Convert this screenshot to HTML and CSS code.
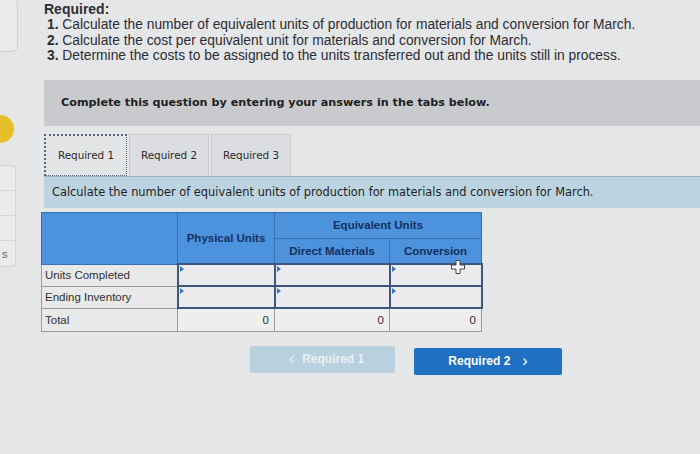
FILE: index.html
```html
<!DOCTYPE html>
<html>
<head>
<meta charset="utf-8">
<link rel="stylesheet" href="styles.css">
</head>
<body>
<div class="page">
  <aside class="side">
    <div class="side-top"></div>
    <div class="side-dot"></div>
    <div class="side-list">
      <div class="side-cell"></div>
      <div class="side-cell"></div>
      <div class="side-cell"></div>
      <div class="side-cell last">s</div>
    </div>
  </aside>
  <main class="main">
    <div class="req">
      <div class="req-title">Required:</div>
      <div class="req-line"><b>1.</b> Calculate the number of equivalent units of production for materials and conversion for March.</div>
      <div class="req-line"><b>2.</b> Calculate the cost per equivalent unit for materials and conversion for March.</div>
      <div class="req-line"><b>3.</b> Determine the costs to be assigned to the units transferred out and the units still in process.</div>
    </div>
    <div class="banner">Complete this question by entering your answers in the tabs below.</div>
    <div class="tabs">
      <div class="tab active">Required 1</div>
      <div class="tab">Required 2</div>
      <div class="tab">Required 3</div>
    </div>
    <div class="instr">Calculate the number of equivalent units of production for materials and conversion for March.</div>
    <div class="table-wrap">
      <table class="eq">
        <colgroup>
          <col class="c-label"><col class="c-phys"><col class="c-dm"><col class="c-conv">
        </colgroup>
        <thead>
          <tr class="h1">
            <th rowspan="2" class="blank"></th>
            <th rowspan="2">Physical Units</th>
            <th colspan="2">Equivalent Units</th>
          </tr>
          <tr class="h2">
            <th>Direct Materials</th>
            <th>Conversion</th>
          </tr>
        </thead>
        <tbody>
          <tr class="inrow">
            <td class="label">Units Completed</td>
            <td class="in"><span class="mark"></span></td>
            <td class="in"><span class="mark"></span></td>
            <td class="in"><span class="mark"></span></td>
          </tr>
          <tr class="inrow">
            <td class="label">Ending Inventory</td>
            <td class="in"><span class="mark"></span></td>
            <td class="in"><span class="mark"></span></td>
            <td class="in"><span class="mark"></span></td>
          </tr>
          <tr class="total">
            <td class="label">Total</td>
            <td class="num">0</td>
            <td class="num">0</td>
            <td class="num">0</td>
          </tr>
        </tbody>
      </table>
      <svg class="cursor" width="16" height="16" viewBox="0 0 16 16">
        <path d="M6 1.5h4v4.5h4.5v4h-4.5v4.5h-4v-4.5h-4.5v-4h4.5z" fill="#ffffff" stroke="#444" stroke-width="1"/>
      </svg>
    </div>
    <div class="nav">
      <div class="btn prev"><span class="chev">&lsaquo;</span> Required 1</div>
      <div class="btn next">Required 2 <span class="chev wide">&rsaquo;</span></div>
    </div>
  </main>
</div>
</body>
</html>
```

FILE: styles.css
```css
* { box-sizing: border-box; }
html, body { margin: 0; padding: 0; }
body {
  background: #e5e6e8;
  width: 700px;
  height: 454px;
  overflow: hidden;
  font-family: "Liberation Sans", Arial, sans-serif;
  color: #2a2a2e;
}
.page {
  display: flex;
  align-items: flex-start;
}
.side {
  width: 44px;
  flex: none;
  display: flex;
  flex-direction: column;
}
.side-top {
  width: 18px;
  height: 54px;
  margin-top: -2px;
  border: 1px solid #d1d2d5;
  border-left: none;
  border-radius: 0 6px 6px 0;
  background: #e9eaec;
}
.side-dot {
  width: 28px;
  height: 28px;
  margin-left: -14px;
  margin-top: 63px;
  border-radius: 50%;
  background: #e6bf2a;
}
.side-list {
  margin-top: 22px;
  width: 16px;
  border: 1px solid #d4d5d8;
  border-left: none;
  border-radius: 0 4px 4px 0;
  background: #e9eaec;
}
.side-cell {
  height: 25px;
  border-bottom: 1px solid #d4d5d8;
  font-size: 11px;
  color: #666;
  padding: 7px 0 0 2px;
}
.side-cell.last { border-bottom: none; }

.main {
  width: 656px;
  flex: none;
}
.req {
  padding: 2px 0 0 0;
  font-size: 13.8px;
  color: #2d2d33;
}
.req-title {
  font-weight: bold;
  font-size: 14px;
  line-height: 15px;
}
.req-line {
  padding-left: 3px;
  line-height: 15.5px;
}
.banner {
  margin-top: 16px;
  height: 46px;
  background: #c8cacd;
  display: flex;
  align-items: center;
  padding-left: 17px;
  font-family: "DejaVu Sans", Verdana, sans-serif;
  font-weight: bold;
  font-size: 11.2px;
  color: #1f1f22;
}
.tabs {
  margin-top: 8px;
  display: flex;
  gap: 2px;
  height: 42px;
}
.tab {
  width: 80px;
  height: 42px;
  background: #dcdde0;
  border: 1px solid #cbccd0;
  border-bottom: none;
  font-family: "DejaVu Sans", Verdana, sans-serif;
  font-size: 10.4px;
  color: #2a2a2e;
  display: flex;
  align-items: center;
  justify-content: center;
}
.tab.active {
  width: 83px;
  background: #e3e4e6;
  border: 1px dotted #5a6478;
  border-width: 2px 1px 1px 2px;
}
.instr {
  height: 32px;
  background: #bcd4e2;
  border-top: 1px solid #9fb2c0;
  display: flex;
  align-items: center;
  padding-left: 8px;
  font-family: "DejaVu Sans", Verdana, sans-serif;
  font-size: 11.4px;
  color: #1e1f24;
}
.table-wrap {
  position: relative;
  margin-top: 4px;
  margin-left: -3px;
  width: 440px;
}
.eq {
  border-collapse: collapse;
  table-layout: fixed;
  width: 440px;
  font-family: "Liberation Sans", Arial, sans-serif;
}
.c-label { width: 136px; }
.c-phys { width: 97px; }
.c-dm { width: 115px; }
.c-conv { width: 92px; }
.eq th {
  background: #4d92dc;
  color: #14305e;
  font-size: 11.5px;
  font-weight: bold;
  border: 1px solid #3a6fae;
  padding: 0;
}
.eq tr.h1 th { height: 26px; }
.eq tr.h2 th { height: 26px; }
.eq td {
  height: 22px;
  padding: 0;
  font-size: 11.5px;
  color: #2f2f33;
}
.eq td.label {
  background: #e9e9ea;
  border: 1px solid #9a9b9f;
  padding-left: 3px;
}
.eq td.in {
  background: #ebebed;
  border: 2px solid #3d5680;
  position: relative;
}
.mark {
  position: absolute;
  left: 1px;
  top: 1px;
  width: 0;
  height: 0;
  border-top: 3px solid transparent;
  border-bottom: 3px solid transparent;
  border-left: 4px solid #3f6fb5;
}
.eq td.num {
  background: #eeeeef;
  border: 1px solid #9a9b9f;
  text-align: right;
  padding-right: 5px;
  height: 23px;
}
.cursor {
  position: absolute;
  left: 409px;
  top: 47px;
}
.nav {
  margin-top: 14px;
  margin-left: 206px;
  display: flex;
  align-items: flex-start;
  gap: 19px;
}
.btn {
  height: 27px;
  display: flex;
  align-items: center;
  justify-content: center;
  font-family: "Liberation Sans", Arial, sans-serif;
  font-weight: bold;
  font-size: 12px;
  border-radius: 2px;
}
.btn.prev {
  width: 145px;
  background: #b9d0df;
  color: #e9f0f5;
}
.btn.next {
  width: 148px;
  margin-top: 2px;
  background: #1f6fc2;
  color: #ffffff;
}
.chev {
  font-size: 16px;
  margin: 0 8px;
  font-weight: normal;
}
.chev.wide { margin: 0 0 0 12px; }
```
